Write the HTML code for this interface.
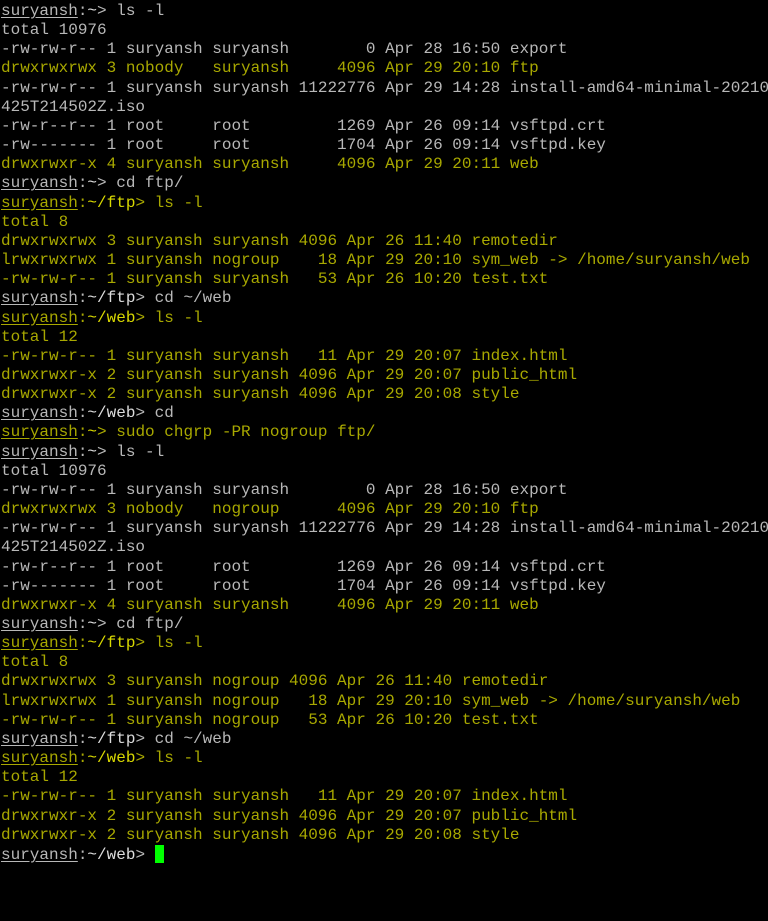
<!DOCTYPE html>
<html><head><meta charset="utf-8"><style>
html,body{margin:0;padding:0;background:#000;width:768px;height:921px;overflow:hidden}
pre{margin:0;padding:2px 0 0 1px;font-family:"Liberation Mono",monospace;font-size:16px;line-height:19.16px;color:#b8b8b8;white-space:pre}
.y{color:#a8a800}
.y .p{color:#d8d800}
.p{color:#dcdcdc}
u{text-decoration:underline;text-underline-offset:2px}
.c{display:inline-block;width:9px;height:18px;background:#00ff00;vertical-align:-4px}
</style></head><body><pre><u>suryansh</u>:<span class="p">~</span>&gt; ls -l
total 10976
-rw-rw-r-- 1 suryansh suryansh        0 Apr 28 16:50 export
<span class="y">drwxrwxrwx 3 nobody   suryansh     4096 Apr 29 20:10 ftp</span>
-rw-rw-r-- 1 suryansh suryansh 11222776 Apr 29 14:28 install-amd64-minimal-20210
425T214502Z.iso
-rw-r--r-- 1 root     root         1269 Apr 26 09:14 vsftpd.crt
-rw------- 1 root     root         1704 Apr 26 09:14 vsftpd.key
<span class="y">drwxrwxr-x 4 suryansh suryansh     4096 Apr 29 20:11 web</span>
<u>suryansh</u>:<span class="p">~</span>&gt; cd ftp/
<span class="y"><u>suryansh</u>:<span class="p">~/ftp</span>&gt; ls -l
total 8
drwxrwxrwx 3 suryansh suryansh 4096 Apr 26 11:40 remotedir
lrwxrwxrwx 1 suryansh nogroup    18 Apr 29 20:10 sym_web -&gt; /home/suryansh/web
-rw-rw-r-- 1 suryansh suryansh   53 Apr 26 10:20 test.txt</span>
<u>suryansh</u>:<span class="p">~/ftp</span>&gt; cd ~/web
<span class="y"><u>suryansh</u>:<span class="p">~/web</span>&gt; ls -l
total 12
-rw-rw-r-- 1 suryansh suryansh   11 Apr 29 20:07 index.html
drwxrwxr-x 2 suryansh suryansh 4096 Apr 29 20:07 public_html
drwxrwxr-x 2 suryansh suryansh 4096 Apr 29 20:08 style</span>
<u>suryansh</u>:<span class="p">~/web</span>&gt; cd
<span class="y"><u>suryansh</u>:<span class="p">~</span>&gt; sudo chgrp -PR nogroup ftp/</span>
<u>suryansh</u>:<span class="p">~</span>&gt; ls -l
total 10976
-rw-rw-r-- 1 suryansh suryansh        0 Apr 28 16:50 export
<span class="y">drwxrwxrwx 3 nobody   nogroup      4096 Apr 29 20:10 ftp</span>
-rw-rw-r-- 1 suryansh suryansh 11222776 Apr 29 14:28 install-amd64-minimal-20210
425T214502Z.iso
-rw-r--r-- 1 root     root         1269 Apr 26 09:14 vsftpd.crt
-rw------- 1 root     root         1704 Apr 26 09:14 vsftpd.key
<span class="y">drwxrwxr-x 4 suryansh suryansh     4096 Apr 29 20:11 web</span>
<u>suryansh</u>:<span class="p">~</span>&gt; cd ftp/
<span class="y"><u>suryansh</u>:<span class="p">~/ftp</span>&gt; ls -l
total 8
drwxrwxrwx 3 suryansh nogroup 4096 Apr 26 11:40 remotedir
lrwxrwxrwx 1 suryansh nogroup   18 Apr 29 20:10 sym_web -&gt; /home/suryansh/web
-rw-rw-r-- 1 suryansh nogroup   53 Apr 26 10:20 test.txt</span>
<u>suryansh</u>:<span class="p">~/ftp</span>&gt; cd ~/web
<span class="y"><u>suryansh</u>:<span class="p">~/web</span>&gt; ls -l
total 12
-rw-rw-r-- 1 suryansh suryansh   11 Apr 29 20:07 index.html
drwxrwxr-x 2 suryansh suryansh 4096 Apr 29 20:07 public_html
drwxrwxr-x 2 suryansh suryansh 4096 Apr 29 20:08 style</span>
<u>suryansh</u>:<span class="p">~/web</span>&gt; <span class="c"></span></pre></body></html>
